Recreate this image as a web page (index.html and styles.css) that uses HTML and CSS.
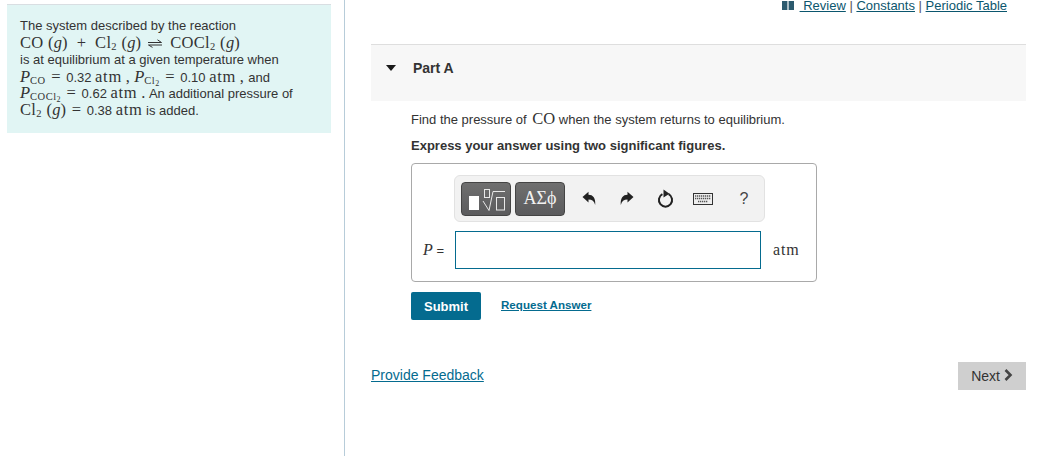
FILE: index.html
```html
<!DOCTYPE html>
<html lang="en">
<head>
  <meta charset="UTF-8">
  <meta name="viewport" content="width=device-width, initial-scale=1.0">
  <title>Part A</title>
  <link rel="stylesheet" href="styles.css">
</head>
<body>
  <div class="page">
    <div class="sidebar">
      <div class="intro">
        <p>The system described by the reaction</p>
        <p class="math-line"><span class="m">CO (<i>g</i>) &nbsp;+&nbsp; Cl<sub>2</sub> (<i>g</i>) <svg class="equil" width="16" height="9" viewBox="0 0 16 9"><path d="M1 3.5H14.5L10.5 0.8M15 6H1.5L5.5 8.4" fill="none" stroke="#333" stroke-width="1"/></svg> COCl<sub>2</sub> (<i>g</i>)</span></p>
        <p>is at equilibrium at a given temperature when</p>
        <p class="math-line"><span class="m"><i>P</i><sub>CO</sub> <span class="eq">=</span> </span>0.32 <span class="m atm">atm ,</span> <span class="m"><i>P</i><sub>Cl<sub class="sub2">2</sub></sub> <span class="eq">=</span> </span>0.10 <span class="m atm">atm ,</span> and</p>
        <p class="math-line line-up"><span class="m"><i>P</i><sub>COCl<sub class="sub2">2</sub></sub> <span class="eq">=</span> </span>0.62 <span class="m atm">atm .</span> An additional pressure of</p>
        <p class="math-line"><span class="m">Cl<sub>2</sub> (<i>g</i>) <span class="eq">=</span> </span>0.38 <span class="m atm">atm</span> is added.</p>
      </div>
    </div>

    <div class="main">
      <div class="top-links">
        <svg class="book" width="12" height="9" viewBox="0 0 12 9"><path d="M0 0H5.4V9H0ZM6.6 0H12V9H6.6Z" fill="#2c5a6e"/></svg>
        <a href="#">&nbsp;Review</a> | <a href="#">Constants</a> | <a href="#">Periodic Table</a>
      </div>

      <div class="part-head">
        <span class="caret"></span>
        <h2>Part A</h2>
      </div>

      <div class="part-body">
        <p class="question">Find the pressure of <span class="m co">CO</span> when the system returns to equilibrium.</p>
        <p class="hint">Express your answer using two significant figures.</p>

        <div class="answer-box">
          <div class="toolbar">
            <button class="tool-btn tpl" type="button">
              <svg width="40" height="26" viewBox="0 0 40 26">
                <rect x="3" y="9" width="10" height="14" fill="#fff"/>
                <rect x="18.5" y="2.5" width="5" height="8" fill="none" stroke="#e8e8e8"/>
                <path d="M17 14L23 23.5L27 4.5H39" fill="none" stroke="#e8e8e8" stroke-width="1"/>
                <rect x="30.5" y="10.5" width="8" height="12.5" fill="none" stroke="#e8e8e8"/>
              </svg>
            </button>
            <button class="tool-btn greek" type="button">ΑΣϕ</button>
            <div class="tool-icons">
              <span class="tool-icon"><svg width="14" height="15" viewBox="0 0 14 15"><path d="M0.5 6L6.5 0.8V3.8C11 3.8 13.8 7 13.2 14C12.2 10.4 10.2 8.6 6.5 8.6V11.4Z" fill="#222"/></svg></span>
              <span class="tool-icon"><svg width="14" height="15" viewBox="0 0 14 15"><path d="M13.5 6L7.5 0.8V3.8C3 3.8 0.2 7 0.8 14C1.8 10.4 3.8 8.6 7.5 8.6V11.4Z" fill="#222"/></svg></span>
              <span class="tool-icon"><svg width="17" height="19" viewBox="0 0 17 19"><path d="M5.4 5.2A6.6 6.6 0 1 0 11.6 5.2" fill="none" stroke="#222" stroke-width="2"/><path d="M6.5 0.5L12.5 4.8L6.5 8.5Z" fill="#222"/></svg></span>
              <span class="tool-icon"><svg width="20" height="12" viewBox="0 0 20 12"><rect x="0.5" y="0.5" width="19" height="11" fill="#eee" stroke="#333"/><path d="M2 3H18M2 5.5H18M5 8.5H15" stroke="#555" stroke-width="1.5" stroke-dasharray="1.3 .7"/></svg></span>
              <span class="tool-icon help">?</span>
            </div>
          </div>
          <div class="answer-row">
            <label class="answer-label"><i class="m">P</i> =</label>
            <input class="answer-input" type="text">
            <span class="m unit">atm</span>
          </div>
        </div>

        <div class="actions">
          <button class="submit" type="button">Submit</button>
          <a class="request" href="#">Request Answer</a>
        </div>
      </div>

      <div class="footer">
        <a class="feedback" href="#">Provide Feedback</a>
        <button class="next" type="button">Next <svg width="9" height="12" viewBox="0 0 9 12"><path d="M1.5 1L6.5 6L1.5 11" fill="none" stroke="#444" stroke-width="2.6"/></svg></button>
      </div>
    </div>
  </div>
</body>
</html>
```

FILE: styles.css
```css
html, body {
  margin: 0;
  padding: 0;
}

body {
  font-family: "Liberation Sans", Arial, sans-serif;
  font-size: 13px;
  color: #333;
  background: #fff;
}

p {
  margin: 0;
}

a {
  color: #046b8f;
}

.page {
  display: flex;
  height: 456px;
  overflow: hidden;
}

.m {
  font-family: "Liberation Serif", "Times New Roman", serif;
}

/* left panel */
.sidebar {
  box-sizing: border-box;
  width: 345px;
  padding: 4px 13px 0 7px;
  border-right: 1px solid #b7ccd9;
  flex-shrink: 0;
}

.intro {
  box-sizing: border-box;
  height: 129px;
  padding: 12px 13px 0;
  background: #e1f5f4;
  border-top: 1px solid #d9dee2;
}

.intro p {
  height: 17px;
  line-height: 17px;
  white-space: nowrap;
}

.intro p.line-up {
  margin-top: -1px;
}

.math-line .m {
  font-size: 16.5px;
  letter-spacing: 0.3px;
}

.math-line .atm {
  letter-spacing: 0.7px;
  word-spacing: -1px;
}

.intro i {
  letter-spacing: 0;
}

.eq {
  margin: 0 1px;
}

.intro sub {
  font-size: 10.5px;
  letter-spacing: 0.5px;
  line-height: 0;
  vertical-align: -2px;
}

.intro sub.sub2 {
  font-size: 8px;
  vertical-align: -2px;
}

.equil {
  margin: 0 3px 0 1px;
  vertical-align: 0;
}

/* right side */
.main {
  box-sizing: border-box;
  width: 655px;
  margin-left: 26px;
}

.top-links {
  height: 44px;
  padding-right: 19px;
  text-align: right;
  line-height: 12px;
  color: #555;
}

.top-links a {
  color: #0b566e;
}

.book {
  margin-right: 2px;
  vertical-align: 0;
}

.part-head {
  display: flex;
  align-items: flex-start;
  height: 57px;
  background: #f7f7f7;
  border-top: 1px solid #dedede;
  box-sizing: border-box;
}

.caret {
  width: 0;
  height: 0;
  margin: 20px 0 0 15px;
  border-left: 5px solid transparent;
  border-right: 5px solid transparent;
  border-top: 6px solid #1a1a1a;
}

.part-head h2 {
  margin: 15px 0 0 17px;
  font-size: 14px;
  line-height: 16px;
  color: #333;
}

.part-body {
  padding: 9px 0 0 40px;
}

.question {
  line-height: 18px;
}

.co {
  margin-left: 2px;
  font-size: 16.5px;
}

.hint {
  margin-top: 8px;
  font-weight: bold;
  line-height: 17px;
}

.answer-box {
  box-sizing: border-box;
  width: 406px;
  height: 119px;
  margin-top: 9px;
  padding: 11px 0 0 11px;
  border: 1px solid #a9a9a9;
  border-radius: 4px;
}

.toolbar {
  box-sizing: border-box;
  display: flex;
  align-items: center;
  width: 311px;
  height: 47px;
  margin-left: 31px;
  padding-left: 6px;
  background: #f2f2f2;
  border: 1px solid #e2e2e2;
  border-radius: 6px;
}

.tool-btn {
  box-sizing: border-box;
  height: 34px;
  padding: 0;
  border: 1px solid #444;
  border-radius: 4px;
  background: linear-gradient(#6f6f6f, #5b5b5d);
  color: #f2f2f2;
}

.tpl {
  width: 50px;
  margin-right: 4px;
}

.tpl svg {
  display: block;
  margin: 3px auto 0;
}

.greek {
  width: 50px;
  font-family: "Liberation Serif", serif;
  font-size: 18px;
}

.tool-icons {
  display: flex;
  align-items: center;
  margin-left: 5px;
}

.tool-icon {
  display: flex;
  justify-content: center;
  width: 38px;
}

.help {
  padding-left: 3px;
  font-size: 16px;
  color: #444;
}

.answer-row {
  display: flex;
  align-items: center;
  margin-top: 9px;
}

.answer-label {
  width: 32px;
  font-size: 13px;
}

.answer-label .m {
  font-size: 16px;
}

.answer-input {
  box-sizing: border-box;
  width: 306px;
  height: 38px;
  padding: 0;
  border: 1px solid #046b8f;
  background: #fff;
}

.unit {
  margin-left: 12px;
  font-size: 16px;
  letter-spacing: 0.9px;
}

.actions {
  display: flex;
  align-items: center;
  margin-top: 10px;
}

.submit {
  width: 70px;
  height: 28px;
  padding: 0;
  border: 0;
  border-radius: 2px;
  background: #046b8f;
  color: #fff;
  font: bold 13px "Liberation Sans", Arial, sans-serif;
}

.request {
  margin: 0 0 3px 20px;
  font-size: 11.6px;
  font-weight: bold;
}

.footer {
  display: flex;
  justify-content: space-between;
  align-items: center;
  margin-top: 42px;
}

.feedback {
  margin-bottom: 2px;
  font-size: 14px;
}

.next {
  width: 68px;
  height: 28px;
  padding: 0;
  border: 0;
  background: #cfcfcf;
  color: #333;
  font: 14px "Liberation Sans", Arial, sans-serif;
}
```
